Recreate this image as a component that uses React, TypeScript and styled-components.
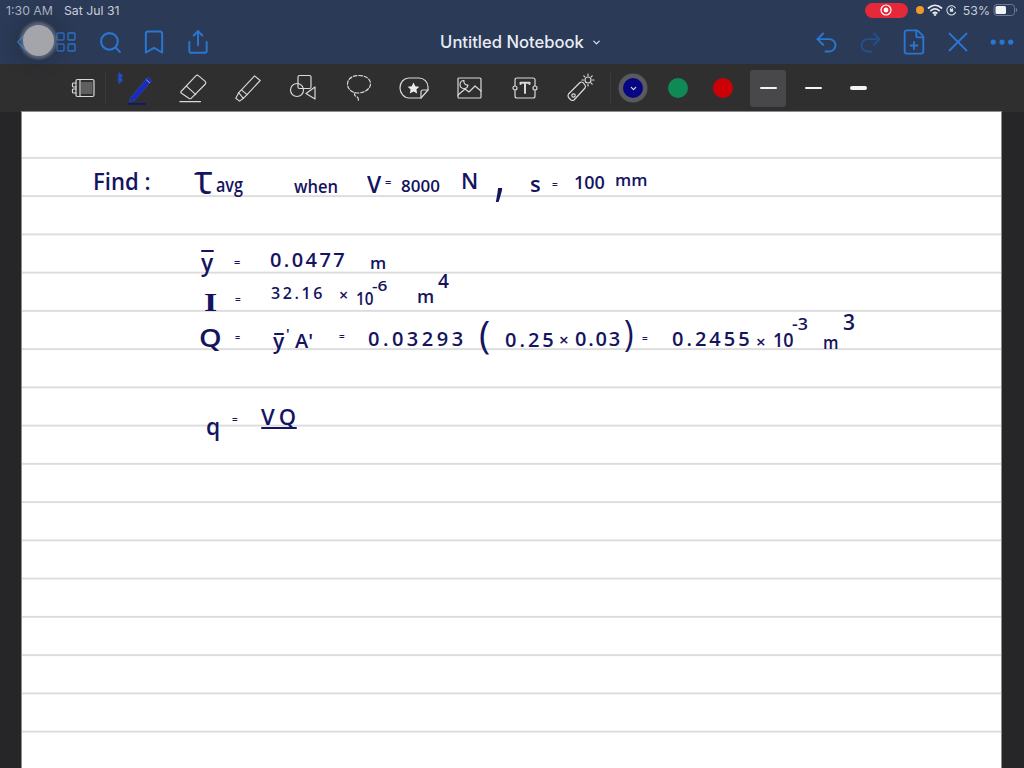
import React from 'react';
import styled, { createGlobalStyle } from 'styled-components';
import { ChevronDown, ChevronLeft, LayoutGrid, Search, Bookmark, Share, Undo2, Redo2, FilePlus, X, MoreHorizontal } from 'lucide-react';

const Global = createGlobalStyle`
  html, body { margin: 0; padding: 0; background: #262628; }
  #root { width: 1024px; height: 768px; overflow: hidden; }
`;

const Screen = styled.div`
  width: 1024px;
  height: 768px;
  display: flex;
  flex-direction: column;
  overflow: hidden;
  font-family: Inter, "Liberation Sans", sans-serif;
  background: #262628;
`;

const Header = styled.header`
  height: 64px;
  background: #2b3a56;
  display: flex;
  flex-direction: column;
  position: relative;
`;

const StatusBar = styled.div`
  height: 20px;
  display: flex;
  align-items: center;
  justify-content: space-between;
  padding: 0 6px;
  color: #c9cfd9;
  font-size: 12.3px;
`;

const StatusGroup = styled.div<{ $gap: number }>`
  display: flex;
  align-items: center;
  gap: ${(p) => p.$gap}px;
`;

const Clock = styled.span`
  color: #aeb6c4;
`;

const RecordPill = styled.div`
  width: 43px;
  height: 15px;
  border-radius: 8px;
  background: #e5283a;
  display: flex;
  align-items: center;
  justify-content: center;
  margin-right: 5px;
`;

const Percent = styled.span`
  font-size: 12.3px;
  margin-left: 3px;
`;

const NavBar = styled.div`
  flex: 1;
  display: grid;
  grid-template-columns: 1fr auto 1fr;
  align-items: center;
`;

const NavGroup = styled.div<{ $end?: boolean }>`
  display: flex;
  align-items: center;
  color: #2a76d2;
  justify-content: ${(p) => (p.$end ? 'flex-end' : 'flex-start')};
`;

const NavSlot = styled.div`
  width: 44px;
  height: 44px;
  display: flex;
  align-items: center;
  justify-content: center;
  flex: none;
`;

const Title = styled.div`
  color: #e8edf5;
  font-size: 16.6px;
  font-weight: 500;
  display: flex;
  align-items: center;
  gap: 7px;
  margin-left: 18px;
`;

const TouchDot = styled.div`
  position: absolute;
  left: 23px;
  top: 25px;
  width: 31px;
  height: 31px;
  border-radius: 50%;
  background: #a3a5aa;
  box-shadow: 0 0 3px 3px rgba(170, 176, 188, 0.4), 0 0 14px 9px rgba(30, 35, 45, 0.28);
`;

const Toolbar = styled.div`
  height: 48px;
  background: #2f2f30;
  display: flex;
  align-items: center;
  padding-left: 66px;
  color: #d6d6d6;
`;

const ToolSlot = styled.div<{ $w: number }>`
  width: ${(p) => p.$w}px;
  height: 48px;
  display: flex;
  align-items: center;
  justify-content: center;
  flex: none;
`;

const Divider = styled.div`
  width: 1px;
  height: 32px;
  background: #3b3b3c;
  flex: none;
`;

const Swatch = styled.div<{ $color: string; $ring?: boolean }>`
  width: 20px;
  height: 20px;
  border-radius: 50%;
  background: ${(p) => p.$color};
  box-shadow: ${(p) => (p.$ring ? '0 0 0 4.5px #5a5a5e' : 'none')};
  display: flex;
  align-items: center;
  justify-content: center;
`;

const WidthButton = styled.div<{ $active?: boolean }>`
  width: 36px;
  height: 37px;
  border-radius: 3px;
  background: ${(p) => (p.$active ? '#48484a' : 'transparent')};
  display: flex;
  align-items: center;
  justify-content: center;
`;

const Stroke = styled.div<{ $h: number }>`
  width: 17px;
  height: ${(p) => p.$h}px;
  border-radius: 3px;
  background: #f4f4f4;
`;

const Workspace = styled.main`
  flex: 1;
  padding: 0 23px 0 22px;
  min-height: 0;
`;

const Page = styled.div`
  height: 100%;
  position: relative;
  background-color: #ffffff;
  background-image:
    linear-gradient(#ffffff, #ffffff),
    linear-gradient(to bottom, transparent 36.7px, #dddddd 36.7px);
  background-size: 100% 40px, 100% 38.25px;
  background-position: 0 0, 0 8.6px;
  background-repeat: no-repeat, repeat-y;
  box-shadow: 0 0 0 1px #8c8c8e;
`;

const Ink = styled.span<{ $x: number; $y: number; $s?: number; $sx?: number; $ls?: number; $serif?: boolean; $light?: boolean }>`
  position: absolute;
  left: ${(p) => p.$x - 22}px;
  top: ${(p) => p.$y - 112}px;
  font-family: ${(p) => (p.$serif ? '"Liberation Serif", serif' : '"Open Sans", "Liberation Sans", sans-serif')};
  font-size: ${(p) => p.$s ?? 17}px;
  font-weight: ${(p) => (p.$light ? 400 : 600)};
  letter-spacing: ${(p) => p.$ls ?? 0}px;
  line-height: 1;
  color: #14145f;
  white-space: nowrap;
  transform: scaleX(${(p) => p.$sx ?? 1});
  transform-origin: left top;
`;

const Rule = styled.div<{ $x: number; $y: number; $w: number }>`
  position: absolute;
  left: ${(p) => p.$x - 22}px;
  top: ${(p) => p.$y - 112}px;
  width: ${(p) => p.$w}px;
  height: 2px;
  background: #14145f;
  border-radius: 1px;
`;

const line = { fill: 'none', stroke: '#d9d9d9', strokeWidth: 1.2, strokeLinecap: 'round' as const, strokeLinejoin: 'round' as const };

function LayersIcon() {
  return (
    <svg width="24" height="20" viewBox="0 0 24 20" {...line}>
      <rect x="5" y="1.5" width="18" height="17" rx="1.5" />
      <rect x="10" y="4" width="11.5" height="12" fill="#5f5f5f" stroke="none" />
      <path d="M9 1.5v17M5 5H2.5a1 1 0 0 0-1 1v2a1 1 0 0 0 1 1H5M5 11H2.5a1 1 0 0 0-1 1v2a1 1 0 0 0 1 1H5" />
    </svg>
  );
}

function PenIcon() {
  return (
    <svg width="40" height="34" viewBox="0 0 40 34">
      <path d="M15 26 L32 6 L36 9.5 L19 29 L13 31 Z" fill="#1a2cc0" stroke="#2d3f90" strokeWidth="1" />
      <path d="M30 8.5 L34 12" stroke="#8f9bd8" strokeWidth="1" />
      <path d="M12 33H30" stroke="#0b1470" strokeWidth="1.5" />
      <path d="M3 1.5 L6.5 5 L4.5 7 L6.5 9 L3 12.5 V1.5 M1 4.5 L6.5 9.5 M1 9.5 L6.5 4.5" fill="#1f50d0" stroke="#1f50d0" strokeWidth="0.8" />
    </svg>
  );
}

function EraserIcon() {
  return (
    <svg width="30" height="30" viewBox="0 0 32 32" {...line}>
      <path d="M3 20 L19 3 Q20.5 1.5 22 3 L29 9 Q30.5 10.5 29 12 L14 27 Q13 28 11.5 27 L3 21 Z" />
      <path d="M9 14 L19 23" />
      <path d="M2 30.5 H24" />
    </svg>
  );
}

function HighlighterIcon() {
  return (
    <svg width="30" height="30" viewBox="0 0 30 32" {...line}>
      <path d="M8 18 L22 3 L28 8 L14 23 Z" />
      <path d="M8 18 L5 21 L10 27 L14 23" />
      <path d="M5 21 L2 27 L6 30 L10 27" />
    </svg>
  );
}

function ShapesIcon() {
  return (
    <svg width="28" height="28" viewBox="0 0 28 28" {...line}>
      <rect x="9" y="1.5" width="13" height="13" rx="1.5" />
      <circle cx="8" cy="16" r="6.5" />
      <path d="M26 13 V25 L17 19.5 Z" />
    </svg>
  );
}

function LassoIcon() {
  return (
    <svg width="26" height="28" viewBox="0 0 26 28" {...line} strokeDasharray="3.5 1.8">
      <path d="M13 1.5 C20 1.5 24.5 5 24.5 10 C24.5 15 18 19 12 19 C6 19 1.5 15 1.5 10 C1.5 5 6 1.5 13 1.5 Z" />
      <path d="M9 19 C7 22 11 22 12 24 C13 26 12 27 11 27" />
    </svg>
  );
}

function StickerIcon() {
  return (
    <svg width="30" height="24" viewBox="0 0 30 24" {...line}>
      <path d="M10 2 H20 C25 2 29 6 29 11 V14 L22 22 H10 C5 22 1 17 1 12 C1 6 5 2 10 2 Z" />
      <path d="M29 14 H24 Q22 14 22 16 V22" />
      <path d="M14.5 6.5 L16.3 10.2 L20.3 10.7 L17.4 13.4 L18.2 17.4 L14.5 15.5 L10.8 17.4 L11.6 13.4 L8.7 10.7 L12.7 10.2 Z" fill="#eaeaea" stroke="none" />
    </svg>
  );
}

function ImageIcon() {
  return (
    <svg width="25" height="22" viewBox="0 0 25 22" {...line}>
      <rect x="1" y="1" width="23" height="20" rx="1" />
      <path d="M1 18 L8 12 L12 15 L18 9 L24 14" />
      <path d="M7 3.5 A4 4 0 1 0 11 8 A3.5 3.5 0 0 1 7 3.5 Z" />
    </svg>
  );
}

function TextBoxIcon() {
  return (
    <svg width="26" height="22" viewBox="0 0 26 22" {...line}>
      <path d="M3 8.5 V3 Q3 1 5 1 H21 Q23 1 23 3 V8.5 M3 13.5 V19 Q3 21 5 21 H21 Q23 21 23 19 V13.5" />
      <circle cx="3" cy="11" r="2" />
      <circle cx="23" cy="11" r="2" />
      <path d="M8.5 7 V5.8 H17.5 V7 M13 6 V16" strokeWidth="2" />
    </svg>
  );
}

function LaserIcon() {
  return (
    <svg width="30" height="30" viewBox="0 0 30 30" {...line}>
      <path d="M2.5 21 L14 9.5 Q15.5 8.5 17 9.5 L19 12 Q20 13.5 19 15 L8 27 Q6.5 28 5 27 L2.5 24.5 Q1.5 22.5 2.5 21 Z" />
      <circle cx="7.5" cy="22.5" r="1.7" />
      <circle cx="22" cy="7" r="3" />
      <path d="M22 1 V2.5 M22 11.5 V13 M16 7 H17.5 M26.5 7 H28 M17.8 2.8 L18.8 3.8 M25.2 10.2 L26.2 11.2 M26.2 2.8 L25.2 3.8" />
    </svg>
  );
}

function WifiIcon() {
  return (
    <svg width="16" height="12" viewBox="0 0 15 12" fill="none" stroke="#e8ecf2" strokeWidth="1.7" strokeLinecap="round">
      <path d="M1 4 C5 .5 10 .5 14 4" />
      <path d="M3.4 6.6 C6 4.5 9 4.5 11.6 6.6" />
      <path d="M5.8 9 C6.8 8.2 8.2 8.2 9.2 9" />
      <circle cx="7.5" cy="10.6" r=".5" />
    </svg>
  );
}

function RotationLock() {
  return (
    <svg width="11" height="11" viewBox="0 0 12 12" fill="none" stroke="#dfe4ec" strokeWidth="1.1">
      <path d="M10.6 7.6 A5 5 0 1 1 10.4 3.6" />
      <rect x="4.2" y="4.4" width="3.6" height="3" fill="#dfe4ec" stroke="none" />
      <circle cx="6" cy="4.2" r="1.2" strokeWidth=".8" />
    </svg>
  );
}

function Battery() {
  return (
    <svg width="25" height="12" viewBox="0 0 24 12">
      <rect x=".5" y=".5" width="20.5" height="11" rx="3" fill="none" stroke="#6f7a8e" />
      <rect x="2" y="2" width="10.5" height="8" rx="1.5" fill="#f2f4f8" />
      <path d="M22.3 4v4c1-.3 1.4-1 1.4-2s-.4-1.7-1.4-2z" fill="#6f7a8e" />
    </svg>
  );
}

export default function App() {
  return (
    <Screen>
      <Global />
      <Header>
        <StatusBar>
          <StatusGroup $gap={11}>
            <Clock>1:30 AM</Clock>
            <span>Sat Jul 31</span>
          </StatusGroup>
          <StatusGroup $gap={3}>
            <RecordPill>
              <svg width="12" height="12" viewBox="0 0 12 12">
                <circle cx="6" cy="6" r="5" fill="none" stroke="#fff" strokeWidth="1.2" />
                <circle cx="6" cy="6" r="2.4" fill="#fff" />
              </svg>
            </RecordPill>
            <svg width="8" height="8" viewBox="0 0 8 8">
              <circle cx="4" cy="4" r="4" fill="#f09a2e" />
            </svg>
            <WifiIcon />
            <RotationLock />
            <Percent>53%</Percent>
            <Battery />
          </StatusGroup>
        </StatusBar>
        <NavBar>
          <NavGroup>
            <NavSlot><ChevronLeft size={34} strokeWidth={1.2} /></NavSlot>
            <NavSlot><LayoutGrid size={24} strokeWidth={1.3} /></NavSlot>
            <NavSlot><Search size={25} strokeWidth={2} /></NavSlot>
            <NavSlot><Bookmark size={28} strokeWidth={1.7} /></NavSlot>
            <NavSlot><Share size={26} strokeWidth={1.8} /></NavSlot>
          </NavGroup>
          <Title>
            Untitled Notebook
            <ChevronDown size={11} strokeWidth={2.4} />
          </Title>
          <NavGroup $end>
            <NavSlot><Undo2 size={27} strokeWidth={1.7} /></NavSlot>
            <NavSlot><Redo2 size={27} strokeWidth={1.7} color="#24508f" /></NavSlot>
            <NavSlot><FilePlus size={28} strokeWidth={1.6} /></NavSlot>
            <NavSlot><X size={34} strokeWidth={1.3} /></NavSlot>
            <NavSlot><MoreHorizontal size={30} strokeWidth={2.2} /></NavSlot>
          </NavGroup>
        </NavBar>
        <TouchDot />
      </Header>
      <Toolbar>
        <ToolSlot $w={34}><LayersIcon /></ToolSlot>
        <ToolSlot $w={5} />
        <Divider />
        <ToolSlot $w={59}><PenIcon /></ToolSlot>
        <ToolSlot $w={55.4}><EraserIcon /></ToolSlot>
        <ToolSlot $w={55.4}><HighlighterIcon /></ToolSlot>
        <ToolSlot $w={55.4}><ShapesIcon /></ToolSlot>
        <ToolSlot $w={55.4}><LassoIcon /></ToolSlot>
        <ToolSlot $w={55.4}><StickerIcon /></ToolSlot>
        <ToolSlot $w={55.4}><ImageIcon /></ToolSlot>
        <ToolSlot $w={55.4}><TextBoxIcon /></ToolSlot>
        <ToolSlot $w={57.4}><LaserIcon /></ToolSlot>
        <Divider />
        <ToolSlot $w={44}>
          <Swatch $color="#060683" $ring>
            <ChevronDown size={9} strokeWidth={3} color="#dfe4ff" />
          </Swatch>
        </ToolSlot>
        <ToolSlot $w={45}><Swatch $color="#0f8a55" /></ToolSlot>
        <ToolSlot $w={45}><Swatch $color="#cc0007" /></ToolSlot>
        <ToolSlot $w={46}><WidthButton $active><Stroke $h={2.5} /></WidthButton></ToolSlot>
        <ToolSlot $w={45}><Stroke $h={2} /></ToolSlot>
        <ToolSlot $w={45}><Stroke $h={4.5} /></ToolSlot>
      </Toolbar>
      <Workspace>
        <Page>
          <Ink $x={93} $y={169} $s={24} $sx={0.92}>Find :</Ink>
          <Ink $x={194} $y={159} $s={40} $light>τ</Ink>
          <Ink $x={216} $y={176} $s={19} $sx={0.85}>avg</Ink>
          <Ink $x={294} $y={177} $s={18} $sx={0.92}>when</Ink>
          <Ink $x={367} $y={172} $s={24} $sx={0.95}>V</Ink>
          <Ink $x={385} $y={176} $s={11}>=</Ink>
          <Ink $x={401} $y={177} $s={17}>8000</Ink>
          <Ink $x={461} $y={169} $s={22}>N</Ink>
          <Ink $x={494} $y={145} $s={56} $sx={0.8} $light>,</Ink>
          <Ink $x={530} $y={172} $s={22}>s</Ink>
          <Ink $x={552} $y={179} $s={10}>=</Ink>
          <Ink $x={574} $y={173} $s={18}>100</Ink>
          <Ink $x={615} $y={171} $s={17}>mm</Ink>

          <Rule $x={201} $y={250} $w={13} />
          <Ink $x={201} $y={250} $s={24} $sx={0.95}>y</Ink>
          <Ink $x={234} $y={256} $s={11}>=</Ink>
          <Ink $x={270} $y={250} $s={20} $ls={2.4}>0.0477</Ink>
          <Ink $x={370} $y={254} $s={17}>m</Ink>

          <Ink $x={204} $y={290} $s={26} $sx={1.3} $serif>I</Ink>
          <Ink $x={235} $y={294} $s={10}>=</Ink>
          <Ink $x={271} $y={285} $s={16} $ls={2.6}>32.16</Ink>
          <Ink $x={339} $y={287} $s={16}>×</Ink>
          <Ink $x={356} $y={289} $s={18} $sx={0.85}>10</Ink>
          <Ink $x={372} $y={278} $s={15} $sx={1.15}>-6</Ink>
          <Ink $x={417} $y={287} $s={18}>m</Ink>
          <Ink $x={438} $y={272} $s={19}>4</Ink>

          <Ink $x={199} $y={325} $s={25} $sx={1.15}>Q</Ink>
          <Ink $x={235} $y={333} $s={9}>=</Ink>
          <Rule $x={274} $y={333} $w={10} />
          <Ink $x={273} $y={331} $s={21}>y</Ink>
          <Ink $x={286} $y={326} $s={15}>'</Ink>
          <Ink $x={295} $y={331} $s={20}>A'</Ink>
          <Ink $x={339} $y={331} $s={10}>=</Ink>
          <Ink $x={368} $y={329} $s={20} $ls={3.5}>0.03293</Ink>
          <Ink $x={479} $y={315} $s={38} $light>(</Ink>
          <Ink $x={505} $y={330} $s={20} $ls={3}>0.25</Ink>
          <Ink $x={559} $y={331} $s={17}>×</Ink>
          <Ink $x={575} $y={329} $s={20} $ls={1.8}>0.03</Ink>
          <Ink $x={624} $y={315} $s={36} $sx={0.9} $light>)</Ink>
          <Ink $x={642} $y={333} $s={10}>=</Ink>
          <Ink $x={672} $y={329} $s={20} $ls={3}>0.2455</Ink>
          <Ink $x={756} $y={333} $s={17}>×</Ink>
          <Ink $x={773} $y={330} $s={20} $sx={0.9}>10</Ink>
          <Ink $x={792} $y={315} $s={17} $sx={1.05}>-3</Ink>
          <Ink $x={823} $y={333} $s={18} $sx={0.9}>m</Ink>
          <Ink $x={843} $y={312} $s={21}>3</Ink>

          <Ink $x={206} $y={414} $s={24} $sx={0.95}>q</Ink>
          <Ink $x={232} $y={414} $s={10}>=</Ink>
          <Ink $x={261} $y={405} $s={22} $ls={4}>VQ</Ink>
          <Rule $x={261} $y={427} $w={36} />
        </Page>
      </Workspace>
    </Screen>
  );
}
